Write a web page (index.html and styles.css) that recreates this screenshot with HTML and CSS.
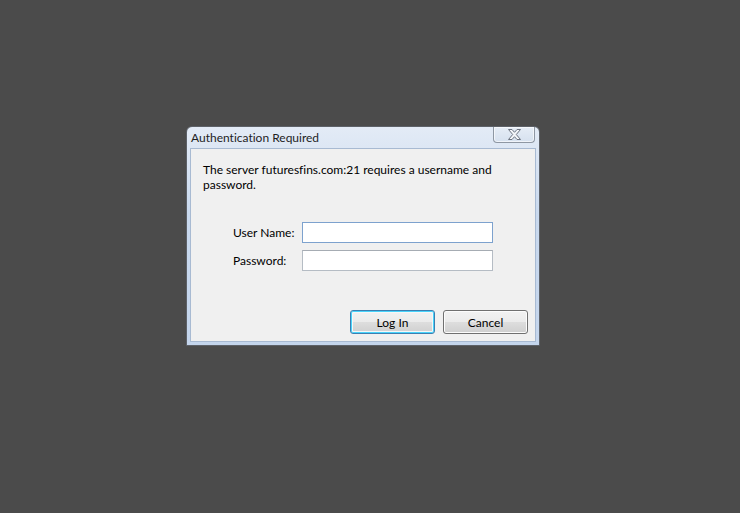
FILE: index.html
```html
<!DOCTYPE html>
<html>
<head>
<meta charset="utf-8">
<link rel="stylesheet" href="styles.css">
</head>
<body>
<div class="window">
  <div class="titlebar">
    <span class="title">Authentication Required</span>
    <div class="close">
      <svg width="15" height="11" viewBox="0 0 15 11">
        <path d="M1.5 0.5 H5 L7.5 3.3 L10 0.5 H13.5 L9.3 5.5 L13.5 10.5 H10 L7.5 7.7 L5 10.5 H1.5 L5.7 5.5 Z" fill="#f4f6f9" stroke="#6d7480" stroke-width="1" stroke-linejoin="round"/>
      </svg>
    </div>
  </div>
  <div class="client">
    <p class="message">The server futuresfins.com:21 requires a username and password.</p>
    <div class="form">
      <label class="label">User Name:</label>
      <div class="input focus"></div>
      <label class="label">Password:</label>
      <div class="input"></div>
    </div>
    <div class="buttons">
      <div class="btn default">Log In</div>
      <div class="btn">Cancel</div>
    </div>
  </div>
</div>
</body>
</html>
```
FILE: styles.css
```css
html, body {
  margin: 0;
  padding: 0;
}
body {
  background: #4b4b4b;
  width: 740px;
  height: 513px;
  overflow: hidden;
  font-family: "Lato", "Noto Sans", sans-serif;
  font-size: 12px;
  font-variant-ligatures: none;
  color: #000;
  padding: 126px 0 0 186px;
  box-sizing: border-box;
}
.window {
  width: 354px;
  height: 220px;
  box-sizing: border-box;
  border: 1px solid #5d6168;
  border-radius: 6px 6px 0 0;
  background: linear-gradient(#e3ebf6, #c9d9ee 40%, #c4d5ec);
  padding: 0 3px 3px 3px;
  display: flex;
  flex-direction: column;
}
.titlebar {
  height: 21px;
  display: flex;
  align-items: flex-start;
  justify-content: space-between;
}
.title {
  padding: 3px 0 0 1px;
  line-height: 16px;
  color: #1e1e1e;
}
.close {
  width: 42px;
  height: 16px;
  box-sizing: border-box;
  margin-right: 1px;
  border: 1px solid #8e97a3;
  border-top: none;
  border-radius: 0 0 4px 4px;
  background: linear-gradient(#e6edf6, #d6e1ef);
  display: flex;
  align-items: center;
  justify-content: center;
  box-shadow: inset 0 0 0 1px rgba(255,255,255,0.6);
}
.close svg {
  display: block;
}
.client {
  flex: 1;
  border: 1px solid #a8bad2;
  background: #f0f0f0;
  padding: 13px 7px 7px 12px;
  display: flex;
  flex-direction: column;
}
.message {
  margin: 0;
  line-height: 15px;
  width: 300px;
}
.form {
  margin: 30px 0 0 30px;
  display: grid;
  grid-template-columns: 61px 191px;
  column-gap: 8px;
  row-gap: 7px;
  align-items: center;
}
.label {
  text-align: left;
  line-height: 15px;
  white-space: nowrap;
}
.input {
  height: 21px;
  box-sizing: border-box;
  background: #fff;
  border: 1px solid #b5bcc4;
  border-top-color: #a6acb3;
}
.input.focus {
  border-color: #7da2ce;
}
.buttons {
  margin-top: auto;
  display: flex;
  justify-content: flex-end;
  gap: 8px;
}
.btn {
  width: 85px;
  height: 24px;
  box-sizing: border-box;
  border: 1px solid #707070;
  border-radius: 3px;
  background: linear-gradient(#f2f2f2 0%, #ebebeb 48%, #dddddd 52%, #cfcfcf 100%);
  box-shadow: inset 0 0 0 1px #fcfcfc;
  display: flex;
  align-items: center;
  justify-content: center;
  line-height: 15px;
  color: #000;
}
.btn.default {
  border-color: #3c7fb1;
  box-shadow: inset 0 0 0 1px #48d3fb, inset 0 0 0 2px #f6f6f6;
}
```
